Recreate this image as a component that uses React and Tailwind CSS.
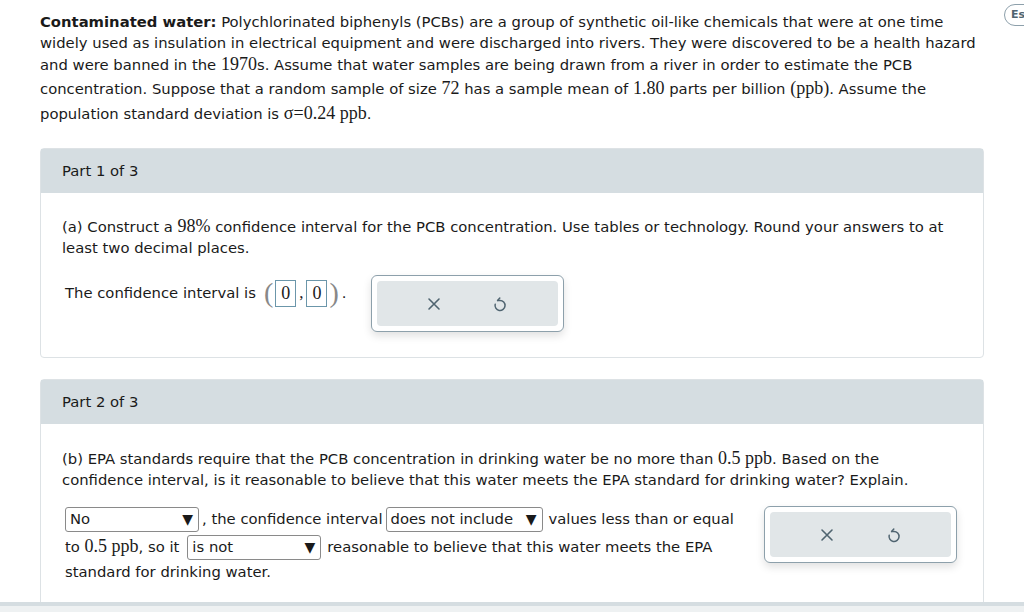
import React from "react";

const M = ({ children }) => (
  <span className="text-[18px] leading-none" style={{ fontFamily: '"Liberation Serif", serif' }}>{children}</span>
);

const XIcon = () => (
  <svg width="14" height="14" viewBox="0 0 14 14" fill="none" stroke="#4f6470" strokeWidth="1.6" strokeLinecap="round">
    <path d="M2 2L12 12M12 2L2 12" />
  </svg>
);

const UndoIcon = () => (
  <svg width="14" height="16" viewBox="0 0 14 16" fill="none" stroke="#4f6470" strokeWidth="1.5" strokeLinecap="round" strokeLinejoin="round">
    <path d="M4.6 4.5 H7 A5 5 0 1 1 2.2 8.2" />
    <path d="M4.6 4.5 L6.8 2.1" />
  </svg>
);

const ActionBox = () => (
  <div className="w-[193px] h-[57px] rounded-[6px] border border-[#8da0ab] bg-white p-[5px] shadow-[0_4px_8px_rgba(0,0,0,0.12)]">
    <div className="h-full rounded-[4px] bg-[#e1e6e8] flex items-center justify-around px-6">
      <XIcon />
      <UndoIcon />
    </div>
  </div>
);

const Select = ({ label, w }) => (
  <span className={`inline-flex items-center justify-between h-[25px] border border-[#8a8a8a] rounded-[3px] pl-[4px] pr-[5px] align-middle ${w}`}>
    <span>{label}</span>
    <span className="text-[14px] leading-none">▼</span>
  </span>
);

const Box = () => (
  <span className="inline-flex items-center justify-center w-[21px] h-[27px] border border-[#6b96aa] text-[18px] align-middle" style={{ fontFamily: '"Liberation Serif", serif' }}>0</span>
);

export default function App() {
  return (
    <div className="relative w-[1024px] h-[612px] overflow-hidden bg-white text-[14.8px] text-[#1a1a1a]" style={{ fontFamily: '"DejaVu Sans", Verdana, sans-serif' }}>
      <div className="absolute right-[-14px] top-[4px] h-[22px] w-[34px] rounded-full border border-[#8da0ab] text-[11px] font-bold text-[#4f6470] pl-[6px] leading-[20px]">Es</div>

      <div className="pl-[40px] pt-[12px] pr-[40px]">
        <div className="h-[20px] leading-[20px]"><b>Contaminated water:</b> Polychlorinated biphenyls (PCBs) are a group of synthetic oil-like chemicals that were at one time</div>
        <div className="h-[21px] leading-[21px]">widely used as insulation in electrical equipment and were discharged into rivers. They were discovered to be a health hazard</div>
        <div className="h-[23px] leading-[23px]">and were banned in the <M>1970</M>s. Assume that water samples are being drawn from a river in order to estimate the PCB</div>
        <div className="h-[25px] leading-[25px]">concentration. Suppose that a random sample of size <M>72</M> has a sample mean of <M>1.80</M> parts per billion <M>(ppb)</M>. Assume the</div>
        <div className="h-[26px] leading-[26px]">population standard deviation is <M>σ=0.24 ppb</M>.</div>

        <div className="mt-[21px] w-[944px] rounded-[4px] border border-[#dde2e5]">
          <div className="h-[44px] bg-[#d5dde1] flex items-center px-[21px]">Part 1 of 3</div>
          <div className="px-[21px] pt-[23px] pb-[25px]">
            <div className="h-[21px] leading-[21px]">(a) Construct a <M>98%</M> confidence interval for the PCB concentration. Use tables or technology. Round your answers to at</div>
            <div className="h-[21px] leading-[21px]">least two decimal places.</div>
            <div className="mt-[16px] flex items-start">
              <div className="flex items-center pl-[3px] pt-[5px]">
                <span>The confidence interval is</span>
                <span className="ml-[8px] mr-[2px] text-[28px] text-[#888] leading-none" style={{ fontFamily: '"Liberation Serif", serif' }}>(</span>
                <Box />
                <span className="text-[17px] mx-[3px]" style={{ fontFamily: '"Liberation Serif", serif' }}>,</span>
                <Box />
                <span className="ml-[2px] text-[28px] text-[#888] leading-none" style={{ fontFamily: '"Liberation Serif", serif' }}>)</span>
                <span className="ml-[3px]">.</span>
              </div>
              <div className="ml-[24px] mt-[1px]"><ActionBox /></div>
            </div>
          </div>
        </div>

        <div className="mt-[21px] w-[944px] h-[240px] rounded-[4px] border border-[#dde2e5]">
          <div className="h-[44px] bg-[#d5dde1] flex items-center px-[21px]">Part 2 of 3</div>
          <div className="px-[21px] pt-[24px]">
            <div className="h-[21px] leading-[21px]">(b) EPA standards require that the PCB concentration in drinking water be no more than <M>0.5 ppb</M>. Based on the</div>
            <div className="h-[21px] leading-[21px]">confidence interval, is it reasonable to believe that this water meets the EPA standard for drinking water? Explain.</div>
            <div className="mt-[15px] flex items-start">
              <div className="pl-[3px] w-[680px]">
                <div className="h-[28px] flex items-center">
                  <Select label="No" w="w-[134px]" />
                  <span className="ml-[3px]">, the confidence interval</span>
                  <Select label="does not include" w="w-[157px] ml-[3px]" />
                  <span className="ml-[6px]">values less than or equal</span>
                </div>
                <div className="h-[28px] flex items-center">
                  <span>to <M>0.5 ppb</M>, so it</span>
                  <Select label="is not" w="w-[134px] ml-[8px]" />
                  <span className="ml-[6px]">reasonable to believe that this water meets the EPA</span>
                </div>
                <div className="h-[22px] flex items-center">standard for drinking water.</div>
              </div>
              <div className="ml-[22px] mt-[1px]"><ActionBox /></div>
            </div>
          </div>
        </div>
      </div>
      <div className="absolute left-0 right-0 top-[602px] h-[4px] bg-[#d5dde1]" />
      <div className="absolute left-0 right-0 top-[606px] h-[6px] bg-[#eef1f2]" />
    </div>
  );
}
